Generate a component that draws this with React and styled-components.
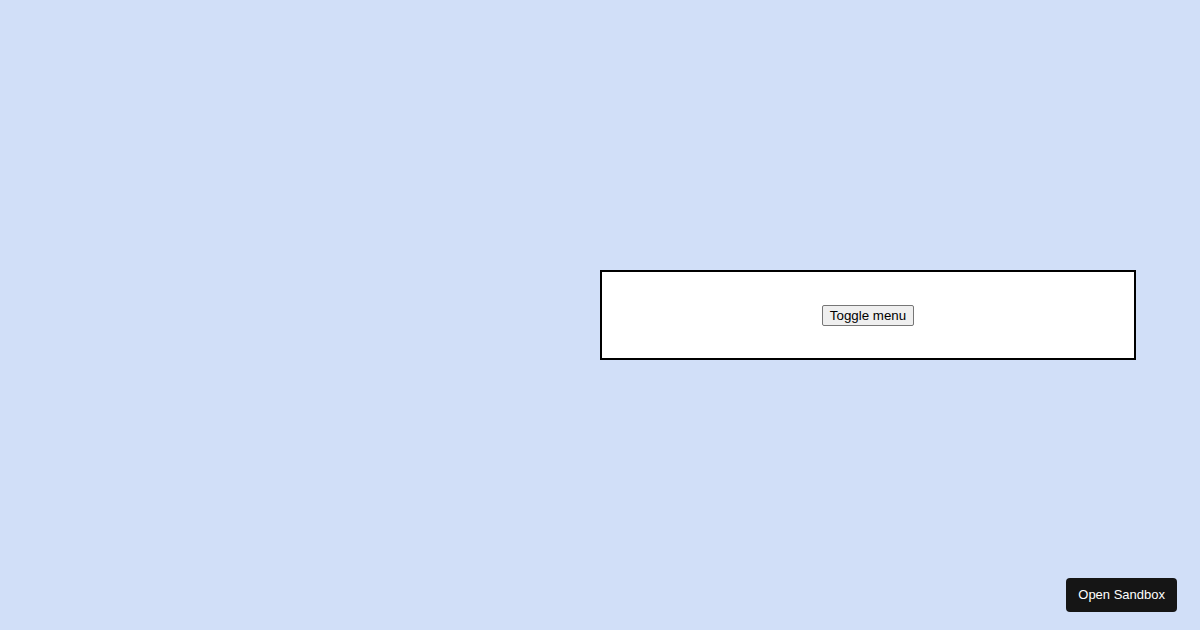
import React, { useState } from 'react';
import styled, { createGlobalStyle } from 'styled-components';

const GlobalStyle = createGlobalStyle`
  html, body {
    margin: 0;
    padding: 0;
    background: #d1dff8;
    font-family: "Liberation Sans", Arial, sans-serif;
  }
`;

const Page = styled.div`
  display: grid;
  grid-template-columns: 600px 1fr;
  align-items: center;
  min-height: 100vh;
  padding-right: 64px;
  box-sizing: border-box;
`;

const Panel = styled.div`
  grid-column: 2;
  height: 90px;
  background: #fff;
  border: 2px solid #000;
  box-sizing: border-box;
  display: flex;
  align-items: center;
  justify-content: center;
`;

const ToggleButton = styled.button`
  font-family: "Liberation Sans", Arial, sans-serif;
  font-size: 13.333px;
  line-height: 15px;
  color: #000;
  background: #efefef;
  border: 1px solid #767676;
  border-radius: 2px;
  padding: 2px 7px;
  cursor: pointer;
`;

const SandboxLink = styled.a`
  position: fixed;
  right: 23px;
  bottom: 18px;
  background: #151515;
  color: #fff;
  font-size: 13px;
  line-height: 16px;
  padding: 9px 12px;
  border-radius: 4px;
  text-decoration: none;
`;

export default function App() {
  const [open, setOpen] = useState(false);

  return (
    <>
      <GlobalStyle />
      <Page>
        <Panel>
          <ToggleButton onClick={() => setOpen(!open)}>Toggle menu</ToggleButton>
        </Panel>
      </Page>
      <SandboxLink href="#">Open Sandbox</SandboxLink>
    </>
  );
}
